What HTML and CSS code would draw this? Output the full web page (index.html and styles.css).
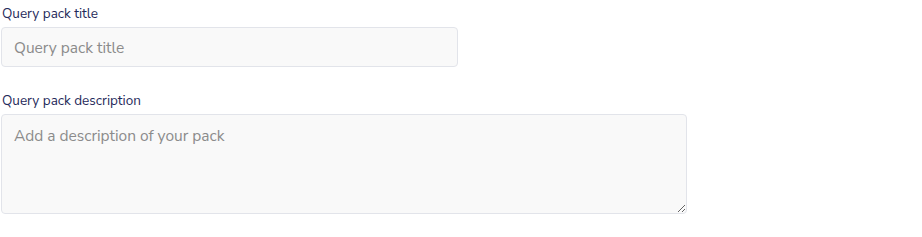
FILE: index.html
```html
<!DOCTYPE html>
<html lang="en">
<head>
    <meta charset="UTF-8">
    <title>Query pack</title>
    <link rel="stylesheet" href="styles.css">
</head>
<body>
<form class="pack-form">
    <div class="form-field">
        <label class="form-field__label" for="pack-title">Query pack title</label>
        <input class="input-field input-field--title" id="pack-title" type="text" placeholder="Query pack title">
    </div>
    <div class="form-field">
        <label class="form-field__label" for="pack-desc">Query pack description</label>
        <textarea class="input-field input-field--textarea" id="pack-desc" placeholder="Add a description of your pack"></textarea>
    </div>
</form>
</body>
</html>
```

FILE: styles.css
```css
body {
    margin: 0;
    padding: 5px 0 0 1px;
    background: #fff;
    font-family: "Nunito Sans", Lato, "Open Sans", sans-serif;
    color: #192147;
}

.pack-form {
    display: flex;
    flex-direction: column;
    gap: 25px;
}

.form-field {
    display: flex;
    flex-direction: column;
    gap: 4px;
}

.form-field__label {
    font-size: 13.5px;
    line-height: 18px;
    padding-left: 1px;
    color: #1f2a5a;
}

.input-field {
    box-sizing: border-box;
    margin: 0;
    background: #f9f9f9;
    border: 1px solid #e2e4ea;
    border-radius: 4px;
    font-family: inherit;
    font-size: 15.5px;
    color: #192147;
    padding: 8px 12px;
}

.input-field::placeholder {
    color: #8b8b8b;
}

.input-field--title {
    width: 457px;
    height: 40px;
}

.input-field--textarea {
    width: 686px;
    height: 100px;
    resize: vertical;
    padding-top: 10px;
}
```
